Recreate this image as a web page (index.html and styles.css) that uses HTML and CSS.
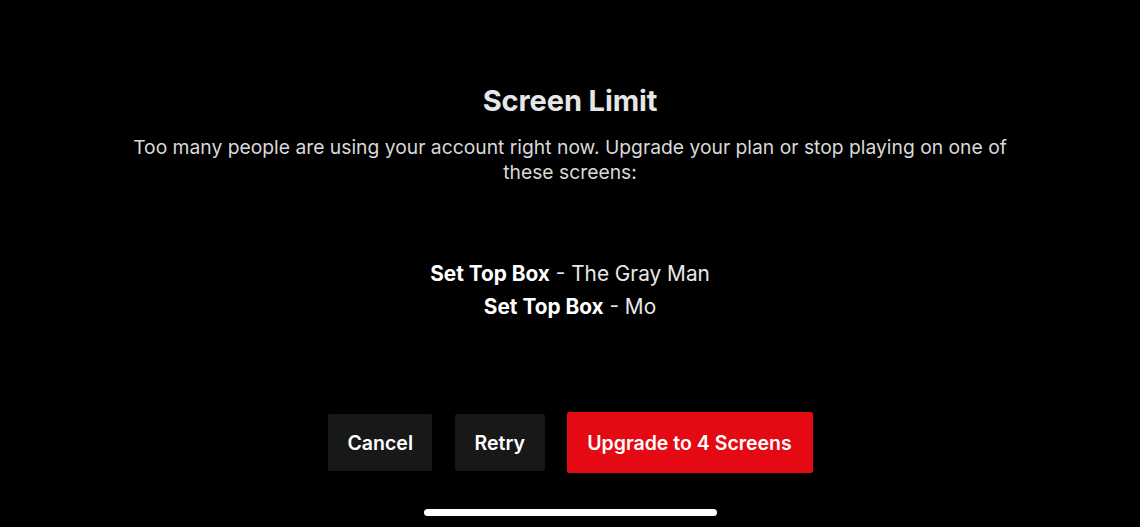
FILE: index.html
```html
<!DOCTYPE html>
<html>
<head>
<meta charset="utf-8">
<link rel="stylesheet" href="styles.css">
</head>
<body>
<div class="screen">
  <div class="dialog">
    <h1 class="title">Screen Limit</h1>
    <p class="message">Too many people are using your account right now. Upgrade your plan or stop playing on one of these screens:</p>
    <ul class="devices">
      <li><span class="device">Set Top Box</span> - The Gray Man</li>
      <li><span class="device">Set Top Box</span> - Mo</li>
    </ul>
    <div class="actions">
      <button class="btn btn-dark btn-cancel">Cancel</button>
      <button class="btn btn-dark btn-retry">Retry</button>
      <button class="btn btn-red">Upgrade to 4 Screens</button>
    </div>
  </div>
  <div class="home-indicator"></div>
</div>
</body>
</html>
```

FILE: styles.css
```css
html, body {
  margin: 0;
  padding: 0;
  background: #000;
}
.screen {
  width: 1140px;
  height: 527px;
  display: flex;
  flex-direction: column;
  align-items: center;
  font-family: Inter, "Noto Sans", "Liberation Sans", sans-serif;
  color: #fff;
  overflow: hidden;
}
.dialog {
  display: flex;
  flex-direction: column;
  align-items: center;
  padding-top: 82px;
}
.title {
  margin: 0;
  font-size: 29px;
  line-height: 38px;
  font-weight: 700;
  color: #e6e6e6;
  letter-spacing: -0.1px;
}
.message {
  margin: 15px 0 0;
  width: 900px;
  text-align: center;
  font-size: 19.3px;
  line-height: 25px;
  color: #d9d9d9;
  font-weight: 400;
}
.devices {
  list-style: none;
  margin: 72px 0 0;
  padding: 0;
  text-align: center;
  font-size: 20.8px;
  line-height: 33px;
  color: #e8e8e8;
}
.device {
  font-weight: 700;
  color: #fff;
}
.actions {
  display: flex;
  align-items: center;
  gap: 23px;
  margin-top: 89px;
  margin-left: 0;
}
.btn {
  border: none;
  font-family: inherit;
  font-size: 19.5px;
  font-weight: 600;
  color: #fff;
  border-radius: 2px;
  padding: 0 20px;
}
.btn-dark {
  background: #181818;
  height: 57px;
}
.btn-cancel { width: 104px; }
.btn-retry { width: 90px; }
.btn-red {
  background: #e50914;
  height: 61px;
  width: 246px;
  margin-left: -1px;
}
.home-indicator {
  margin-top: auto;
  margin-bottom: 11px;
  width: 293px;
  height: 7px;
  border-radius: 4px;
  background: #fff;
}
```
